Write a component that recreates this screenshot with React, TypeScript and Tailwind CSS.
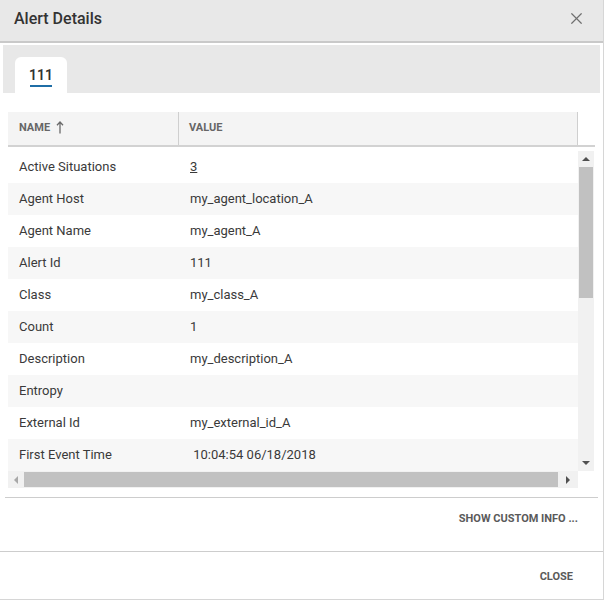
import { X } from "lucide-react";

const rows: [string, string][] = [
  ["Active Situations", "3"],
  ["Agent Host", "my_agent_location_A"],
  ["Agent Name", "my_agent_A"],
  ["Alert Id", "111"],
  ["Class", "my_class_A"],
  ["Count", "1"],
  ["Description", "my_description_A"],
  ["Entropy", ""],
  ["External Id", "my_external_id_A"],
  ["First Event Time", " 10:04:54 06/18/2018"],
];

const Triangle = ({ dir }: { dir: "up" | "down" | "left" | "right" }) => {
  const pts = {
    up: "0,5 4,1 8,5",
    down: "0,1 4,5 8,1",
    left: "5,0 1,4 5,8",
    right: "1,0 5,4 1,8",
  }[dir];
  const vertical = dir === "up" || dir === "down";
  return (
    <svg width={vertical ? 8 : 6} height={vertical ? 6 : 8} viewBox={vertical ? "0 0 8 6" : "0 0 6 8"}>
      <polygon points={pts} fill={dir === "left" ? "#a8a8a8" : "#505050"} />
    </svg>
  );
};

const App = () => {
  return (
    <div
      className="w-[604px] h-[600px] bg-white flex flex-col border-r border-b border-[#d6d6d6] text-[#3a3a3a]"
      style={{ fontFamily: "Roboto, 'Liberation Sans', sans-serif" }}
    >
      <div className="h-[43px] shrink-0 bg-[#e8e8e8] border-b-2 border-[#c9c9c9] flex items-center justify-between pl-[14px] pr-[17px] pb-[4px]">
        <h1 className="text-[16px] font-medium text-[#333]">Alert Details</h1>
        <X className="w-[19px] h-[19px] text-[#6f6f6f]" strokeWidth={1.5} />
      </div>

      <div className="flex-1 flex flex-col px-[3px] pt-[2px]">
        <div className="h-[48px] bg-[#e8e8e8] flex items-end pl-[12px]">
          <div className="w-[52px] h-[36px] bg-white rounded-t-[6px] flex flex-col items-center pt-[10px]">
            <span className="text-[14px] font-semibold leading-[16px] text-[#333]">111</span>
            <div className="w-[22px] h-[2px] bg-[#1f6ea6] mt-[2px]" />
          </div>
        </div>

        <div className="ml-[5px] mr-[5px] mt-[19px] flex flex-col">
          <div className="flex h-[35px] border-b-2 border-[#d2d2d2]">
            <div className="w-[570px] flex bg-[#f4f4f4] border-r border-[#cfcfcf]">
              <div className="w-[171px] flex items-center pl-[11px] border-r border-[#cfcfcf] text-[11px] font-bold text-[#666]">
                NAME
                <svg width="8" height="13" viewBox="0 0 8 13" className="ml-[6px] mb-[2px]">
                  <path d="M4 1 V12.5 M1 4.2 L4 1 L7 4.2" stroke="#6a6a6a" strokeWidth="1.3" fill="none" />
                </svg>
              </div>
              <div className="flex-1 flex items-center pl-[10px] text-[11px] font-bold text-[#666]">VALUE</div>
            </div>
          </div>

          <div className="mt-[4px] flex w-[586px]">
            <div className="w-[570px] flex flex-col">
              {rows.map(([name, value], i) => (
                <div
                  key={name}
                  className={`h-[32px] flex items-center text-[13px] ${i % 2 === 1 ? "bg-[#f7f7f7]" : "bg-white"}`}
                >
                  <div className="w-[171px] pl-[11px]">{name}</div>
                  <div className="pl-[11px] whitespace-pre">
                    {name === "Active Situations" ? <span className="underline">{value}</span> : value}
                  </div>
                </div>
              ))}
            </div>
            <div className="w-[16px] flex flex-col bg-[#f1f1f1]">
              <div className="h-[16px] flex items-center justify-center">
                <Triangle dir="up" />
              </div>
              <div className="h-[131px] mx-[1px] bg-[#c1c1c1]" />
              <div className="flex-1" />
              <div className="h-[16px] flex items-center justify-center">
                <Triangle dir="down" />
              </div>
            </div>
          </div>

          <div className="flex w-[570px] h-[17px] bg-[#f1f1f1] items-center">
            <div className="w-[16px] flex justify-center">
              <Triangle dir="left" />
            </div>
            <div className="flex-1 h-[15px] bg-[#c1c1c1]" />
            <div className="w-[20px] flex justify-center">
              <Triangle dir="right" />
            </div>
          </div>
        </div>

        <div className="mt-[9px] mx-[2px] border-t border-[#cdcdcd]" />
        <div className="flex justify-end pr-[22px] pt-[13px]">
          <span className="text-[11px] font-bold text-[#5a5a5a]">SHOW CUSTOM INFO ...</span>
        </div>
      </div>

      <div className="h-[48px] shrink-0 border-t border-[#cdcdcd] flex items-center justify-end pr-[30px] pt-[4px]">
        <span className="text-[11px] font-bold text-[#5a5a5a]">CLOSE</span>
      </div>
    </div>
  );
};

export default App;
